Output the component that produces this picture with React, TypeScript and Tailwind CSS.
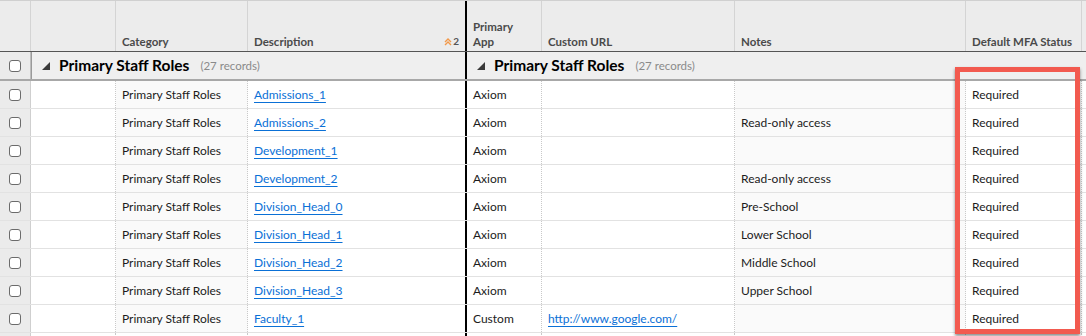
import React from "react";

const cols =
  "grid grid-cols-[31px_85px_132px_219px_75px_193px_231px_116px_1fr]";

const rows = [
  { desc: "Admissions_1", app: "Axiom", url: "", notes: "" },
  { desc: "Admissions_2", app: "Axiom", url: "", notes: "Read-only access" },
  { desc: "Development_1", app: "Axiom", url: "", notes: "" },
  { desc: "Development_2", app: "Axiom", url: "", notes: "Read-only access" },
  { desc: "Division_Head_0", app: "Axiom", url: "", notes: "Pre-School" },
  { desc: "Division_Head_1", app: "Axiom", url: "", notes: "Lower School" },
  { desc: "Division_Head_2", app: "Axiom", url: "", notes: "Middle School" },
  { desc: "Division_Head_3", app: "Axiom", url: "", notes: "Upper School" },
  { desc: "Faculty_1", app: "Custom", url: "http://www.google.com/", notes: "" },
];

function Checkbox() {
  return (
    <span className="block w-[12px] h-[12px] rounded-[3px] border border-[#6b6b6b] bg-white" />
  );
}

function Triangle() {
  return (
    <svg width="8" height="8" viewBox="0 0 8 8" className="shrink-0">
      <path d="M8 0 L8 8 L0 8 Z" fill="#3a3a3a" />
    </svg>
  );
}

function SortMark() {
  return (
    <span className="flex items-center gap-[1px] text-[10px] text-[#555]">
      <svg width="8" height="8" viewBox="0 0 8 8">
        <path d="M1 4 L4 1 L7 4 M1 7 L4 4 L7 7" stroke="#f2994a" strokeWidth="1.4" fill="none" />
      </svg>
      2
    </span>
  );
}

function HeadCell({ children, className = "" }: { children?: React.ReactNode; className?: string }) {
  return (
    <div
      className={`flex items-end pl-[6px] pb-[2px] border-r border-[#d4d4d4] text-[11.5px] font-bold text-[#4a4a4a] leading-[15px] ${className}`}
    >
      {children}
    </div>
  );
}

function Cell({ children, className = "" }: { children?: React.ReactNode; className?: string }) {
  return (
    <div
      className={`flex items-center pl-[6px] pt-[1px] border-r border-dotted border-[#c9c9c9] whitespace-nowrap overflow-hidden ${className}`}
    >
      {children}
    </div>
  );
}

function Link({ children }: { children: React.ReactNode }) {
  return <span className="text-[#0a70d6] underline underline-offset-[3px] decoration-[1px]">{children}</span>;
}

function GroupLabel() {
  return (
    <>
      <Triangle />
      <span className="ml-[9px] text-[15.5px] font-bold text-black">Primary Staff Roles</span>
      <span className="ml-[11px] text-[11.5px] text-[#8a8a8a]">(27 records)</span>
    </>
  );
}

export default function App() {
  return (
    <div
      className="relative w-[1086px] h-[336px] overflow-hidden bg-white text-[12px] text-[#1c1c1c]"
      style={{ fontFamily: "Lato, 'Noto Sans', sans-serif" }}
    >
      {/* Header */}
      <div className={`${cols} h-[52px] bg-[#ececec] border-t border-[#d0d0d0] border-b border-b-[#555]`}>
        <HeadCell className="border-[#cfcfcf]" />
        <HeadCell />
        <HeadCell>Category</HeadCell>
        <HeadCell className="justify-between pr-[6px] border-r-2 border-r-black">
          <span>Description</span>
          <SortMark />
        </HeadCell>
        <HeadCell className="pl-[5px]">
          <span>
            Primary
            <br />
            App
          </span>
        </HeadCell>
        <HeadCell>Custom URL</HeadCell>
        <HeadCell>Notes</HeadCell>
        <HeadCell>Default MFA Status</HeadCell>
        <HeadCell className="border-r-0" />
      </div>

      {/* Group row */}
      <div className={`${cols} h-[29px] bg-[#efefef] border-b-2 border-[#a8a8a8]`}>
        <div className="flex items-center justify-center bg-[#ebebeb] border-r border-[#bdbdbd]">
          <Checkbox />
        </div>
        <div className="col-span-3 flex items-center pl-[10px] border-l border-[#9a9a9a] border-r-2 border-r-black">
          <GroupLabel />
        </div>
        <div className="col-span-5 flex items-center pl-[10px]">
          <GroupLabel />
        </div>
      </div>

      {/* Data rows */}
      {rows.map((r) => (
        <div key={r.desc} className={`${cols} h-[28px] border-b border-[#e2e2e2]`}>
          <div className="flex items-center justify-center bg-[#ebebeb] border-r border-[#cfcfcf]">
            <Checkbox />
          </div>
          <Cell />
          <Cell className="bg-[#fafafa]">Primary Staff Roles</Cell>
          <div className="flex items-center pl-[6px] pt-[1px] border-r-2 border-black whitespace-nowrap">
            <Link>{r.desc}</Link>
          </div>
          <Cell className="pl-[5px]">{r.app}</Cell>
          <Cell>{r.url && <Link>{r.url}</Link>}</Cell>
          <Cell className="bg-[#fafafa]">{r.notes}</Cell>
          <Cell>Required</Cell>
          <Cell className="border-r-0" />
        </div>
      ))}
      <div className={`${cols} h-[28px]`}>
        <div className="bg-[#ebebeb] border-r border-[#cfcfcf]" />
        <Cell />
        <Cell />
        <div className="border-r-2 border-black" />
        <Cell />
        <Cell />
        <Cell />
        <Cell />
        <Cell className="border-r-0" />
      </div>

      {/* Annotation highlight */}
      <div className="absolute left-[955px] top-[67px] w-[125px] h-[267px] border-[5px] border-[#f25a4f] shadow-[0_2px_3px_rgba(0,0,0,0.45)]" />
    </div>
  );
}
